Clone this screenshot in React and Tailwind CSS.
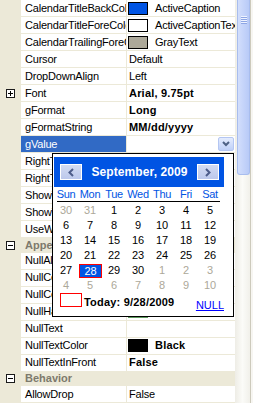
import React from "react";

const rows = [
  { name: "CalendarTitleBackColor", swatch: "bg-[#0054E3]", value: "ActiveCaption" },
  { name: "CalendarTitleForeColor", swatch: "bg-white", value: "ActiveCaptionText" },
  { name: "CalendarTrailingForeColor", swatch: "bg-[#ACA899]", value: "GrayText" },
  { name: "Cursor", value: "Default" },
  { name: "DropDownAlign", value: "Left" },
  { name: "Font", value: "Arial, 9.75pt", bold: true, expand: true },
  { name: "gFormat", value: "Long", bold: true },
  { name: "gFormatString", value: "MM/dd/yyyy", bold: true },
  { name: "gValue", selected: true, dropdown: true },
  { name: "RightToLeft", clip: true },
  { name: "RightToLeftLayout", clip: true },
  { name: "ShowToday", clip: true },
  { name: "ShowTrailingDates", clip: true },
  { name: "UseWaitCursor", clip: true },
  { category: "Appearance", clip: true },
  { name: "NullAlignment", clip: true },
  { name: "NullColor", clip: true },
  { name: "NullColumn", clip: true },
  { name: "NullHatchColor", clip: true, swatch: "bg-[#F4F4F0]", swatchBorder: "border-[#5E9C5E]" },
  { name: "NullText", value: "" },
  { name: "NullTextColor", swatch: "bg-black", value: "Black", bold: true },
  { name: "NullTextInFront", value: "False", bold: true },
  { category: "Behavior" },
  { name: "AllowDrop", value: "False" },
];

function PlusMinus({ plus }) {
  return (
    <div className="relative w-[9px] h-[9px] border border-[#1a1a1a] bg-white">
      <div className="absolute left-[1px] top-[3px] w-[5px] h-px bg-black" />
      {plus && <div className="absolute left-[3px] top-[1px] w-px h-[5px] bg-black" />}
    </div>
  );
}

function DropBtn() {
  return (
    <div className="w-[16px] h-[14px] rounded-[2px] border border-[#B4C6F2] bg-gradient-to-b from-[#E4ECFE] to-[#BFD0F8] flex items-center justify-center">
      <svg width="8" height="6" viewBox="0 0 8 6">
        <polyline points="1,1 4,4 7,1" fill="none" stroke="#4D6185" strokeWidth="2" />
      </svg>
    </div>
  );
}

function Row({ r }) {
  if (r.category) {
    return (
      <div className="flex h-[17px] bg-[#ECE9D8] items-center">
        <div className="w-[21px] shrink-0 flex items-center justify-center">
          <PlusMinus />
        </div>
        <span className={r.clip ? "ml-[4px] w-[27px] overflow-hidden whitespace-nowrap font-bold text-[#7D7A6C]" : "ml-[4px] font-bold text-[#7D7A6C]"}>
          {r.category}
        </span>
      </div>
    );
  }
  return (
    <div className="flex h-[17px]">
      <div className="w-[21px] shrink-0 bg-[#ECE9D8] flex items-center justify-center">
        {r.expand && <PlusMinus plus />}
      </div>
      <div className="w-[105px] shrink-0 flex flex-col">
        <div
          className={
            r.selected
              ? "h-[16px] bg-[#316AC5] text-white pl-[4px] flex items-center overflow-hidden whitespace-nowrap tracking-[-0.2px]"
              : "h-[16px] bg-white text-black pl-[4px] flex items-center overflow-hidden whitespace-nowrap tracking-[-0.2px]"
          }
        >
          <span className={r.clip ? "w-[27px] overflow-hidden" : ""}>{r.name}</span>
        </div>
        <div className="h-px bg-[#ECE9D8]" />
      </div>
      <div className="w-px bg-[#ECE9D8]" />
      <div className="flex-1 min-w-0 flex flex-col">
        <div className="h-[16px] bg-white flex items-center overflow-hidden whitespace-nowrap">
          {r.swatch && (
            <div className={`ml-[1px] w-[20px] h-[13px] border ${r.swatchBorder || "border-black"} ${r.swatch} shrink-0`} />
          )}
          {r.value !== undefined && (
            <span
              className={
                (r.swatch ? "ml-[7px] " : "ml-[2px] ") +
                (r.bold ? "font-bold tracking-[0.2px]" : "tracking-[-0.2px]")
              }
            >
              {r.value}
            </span>
          )}
          {r.dropdown && (
            <div className="ml-auto mr-[1px]">
              <DropBtn />
            </div>
          )}
        </div>
        <div className="h-px bg-[#ECE9D8]" />
      </div>
    </div>
  );
}

const weeks = [
  [["30", 1], ["31", 1], ["1"], ["2"], ["3"], ["4"], ["5"]],
  [["6"], ["7"], ["8"], ["9"], ["10"], ["11"], ["12"]],
  [["13"], ["14"], ["15"], ["16"], ["17"], ["18"], ["19"]],
  [["20"], ["21"], ["22"], ["23"], ["24"], ["25"], ["26"]],
  [["27"], ["28", 0, 1], ["29"], ["30"], ["1", 1], ["2", 1], ["3", 1]],
  [["4", 1], ["5", 1], ["6", 1], ["7", 1], ["8", 1], ["9", 1], ["10", 1]],
];

function NavBtn({ dir }) {
  return (
    <div className="w-[22px] h-[16px] border border-white bg-gradient-to-b from-[#D3DBF2] to-[#BCC8EC] flex items-center justify-center">
      <svg width="6" height="9" viewBox="0 0 6 9">
        {dir === "l" ? (
          <polyline points="5,1 1.5,4.5 5,8" fill="none" stroke="#4D5C8A" strokeWidth="2" />
        ) : (
          <polyline points="1,1 4.5,4.5 1,8" fill="none" stroke="#4D5C8A" strokeWidth="2" />
        )}
      </svg>
    </div>
  );
}

function Calendar() {
  return (
    <div className="absolute left-[52px] top-[153px] w-[182px] h-[164px] border border-black bg-white pt-[3px] pl-[1px]">
      <div className="w-[170px] h-[30px] bg-[#0054E3] flex items-center pl-[6px] pr-[5px]">
        <NavBtn dir="l" />
        <div className="flex-1 text-center text-white font-bold text-[12px] tracking-[0.1px]">September, 2009</div>
        <NavBtn dir="r" />
      </div>
      <div className="grid grid-cols-[repeat(7,24px)] h-[14px] items-center text-[#0054E3] tracking-[-0.3px]">
        {["Sun", "Mon", "Tue", "Wed", "Thu", "Fri", "Sat"].map((d) => (
          <div key={d} className="text-center">{d}</div>
        ))}
      </div>
      <div className="ml-[3px] w-[163px] h-px bg-black" />
      <div className="mt-[1px]">
        {weeks.map((w, i) => (
          <div key={i} className="grid grid-cols-[repeat(7,24px)] h-[15px]">
            {w.map(([d, gray, sel], j) =>
              sel ? (
                <div key={j} className="flex justify-end items-end">
                  <div className="w-[23px] h-[14px] bg-[#0054E3] border border-[#FF0000] text-white flex items-center justify-center">
                    {d}
                  </div>
                </div>
              ) : (
                <div
                  key={j}
                  className={gray ? "flex items-center justify-center text-[#ACA899]" : "flex items-center justify-center text-black"}
                >
                  {d}
                </div>
              )
            )}
          </div>
        ))}
      </div>
      <div className="flex items-start w-[170px]">
        <div className="ml-[6px] w-[22px] h-[14px] border border-[#FF0000]" />
        <div className="ml-[2px] mt-[4px] font-bold tracking-[0.2px]">Today: 9/28/2009</div>
        <div className="ml-auto mt-[7px] text-[#0000FF] underline">NULL</div>
      </div>
    </div>
  );
}

function Scrollbar() {
  return (
    <div className="w-[18px] h-full flex">
      <div className="w-[15px] h-full bg-gradient-to-r from-[#EEEDE6] via-[#FBFBF8] to-[#F1F0EA] pl-[2px]">
        <div className="w-[13px] h-[175px] rounded-b-[3px] border border-t-0 border-[#A8BDEE] bg-gradient-to-r from-[#D2DEFC] to-[#B8CAF7] pt-[16px] flex flex-col items-center">
          {[0, 1, 2, 3].map((i) => (
            <div key={i} className="flex flex-col">
              <div className="w-[6px] h-px bg-[#EEF3FF]" />
              <div className="w-[6px] h-px bg-[#8EA6E4]" />
            </div>
          ))}
        </div>
      </div>
      <div className="w-px h-full bg-[#CDCABC]" />
      <div className="w-[2px] h-full bg-[#F7F6F2]" />
    </div>
  );
}

export default function App() {
  return (
    <div className="relative w-[253px] h-[403px] overflow-hidden bg-white text-[11px] leading-none font-['Liberation_Sans',Arial,sans-serif] text-black flex">
      <div className="w-[235px] shrink-0 flex flex-col">
        {rows.map((r, i) => (
          <Row key={i} r={r} />
        ))}
      </div>
      <Scrollbar />
      <Calendar />
    </div>
  );
}
